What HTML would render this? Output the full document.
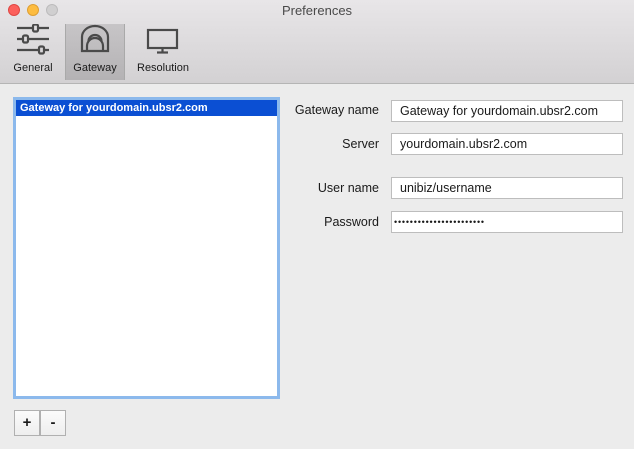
<!DOCTYPE html>
<html><head><style>
*{margin:0;padding:0;box-sizing:border-box}
body{width:634px;height:449px;background:#ececec;font-family:"Liberation Sans",sans-serif;font-size:12.5px;color:#1a1a1a;position:relative;overflow:hidden}
.top{position:absolute;left:0;top:0;width:634px;height:84px;background:linear-gradient(#e8e6e8,#d3d1d3);border-bottom:1px solid #b5b5b5}
.title{position:absolute;top:3px;width:634px;text-align:center;font-size:13px;color:#4a4a4a}
.dot{position:absolute;top:4px;width:12px;height:12px;border-radius:50%}
.tab{position:absolute;top:24px;height:56px;text-align:center;font-size:11px}
.tab svg{position:absolute;left:50%;margin-left:-20px;top:0}
.tab span{position:absolute;left:0;right:0;top:38px}
.sel{background:linear-gradient(#c7c5c7,#b4b2b4);border-left:1px solid #a9a9a9;border-right:1px solid #a9a9a9}
.list{position:absolute;left:13px;top:97px;width:267px;height:302px;background:#fff;border:3px solid #8cb9ec}
.row{background:#0b4fd3;color:#fff;font-weight:bold;font-size:11px;height:16px;line-height:16px;padding-left:4px}
.lbl{position:absolute;width:100px;left:279px;text-align:right;font-size:12.5px}
.in{position:absolute;left:391px;width:232px;height:22px;background:#fff;border:1px solid #bdbdbd;padding-left:8px;line-height:20px;font-size:12.5px}
.btn{position:absolute;top:410px;width:26px;height:26px;border:1px solid #b0b0b0;background:linear-gradient(#fbfbfb,#eeeeee);text-align:center;line-height:24px;font-weight:bold;font-size:15px}
</style></head><body>
<div class="top">
<div class="title">Preferences</div>
<div class="dot" style="left:8px;background:#fc605c;border:1px solid #df4744"></div>
<div class="dot" style="left:27px;background:#fdbc40;border:1px solid #de9f34"></div>
<div class="dot" style="left:46px;background:#d0cfd0;border:1px solid #bcbbbc"></div>
<div class="tab" style="left:4px;width:58px"><svg width="40" height="34" viewBox="0 0 40 34" fill="none" stroke="#4a4a4a" stroke-width="2.2"><line x1="4" y1="4" x2="36" y2="4"/><rect x="20" y="0.5" width="5" height="7" rx="1.5" fill="#e0dee0"/><line x1="4" y1="15" x2="36" y2="15"/><rect x="10" y="11.5" width="5" height="7" rx="1.5" fill="#dcdadc"/><line x1="4" y1="26" x2="36" y2="26"/><rect x="26" y="22.5" width="5" height="7" rx="1.5" fill="#d8d6d8"/></svg><span>General</span></div>
<div class="tab sel" style="left:65px;width:60px"><svg width="40" height="34" viewBox="0 0 40 34" fill="none" stroke="#4a4a4a" stroke-width="2.2"><path d="M7 27V13a13 11 0 0 1 26 0v14z"/><path d="M12 27v-5a8 8 0 0 1 16 0v5"/><path d="M13.5 17a6.5 6 0 0 1 13 0"/></svg><span>Gateway</span></div>
<div class="tab" style="left:132px;width:62px"><svg width="40" height="34" viewBox="0 0 40 34" fill="none" stroke="#4a4a4a" stroke-width="2.2"><rect x="5" y="6" width="29" height="18"/><line x1="19.5" y1="24" x2="19.5" y2="28"/><line x1="14" y1="28.5" x2="25" y2="28.5"/></svg><span>Resolution</span></div>
</div>
<div class="list"><div class="row">Gateway for yourdomain.ubsr2.com</div></div>
<div class="lbl" style="top:103px">Gateway name</div>
<div class="in" style="top:100px">Gateway for yourdomain.ubsr2.com</div>
<div class="lbl" style="top:137px">Server</div>
<div class="in" style="top:133px">yourdomain.ubsr2.com</div>
<div class="lbl" style="top:181px">User name</div>
<div class="in" style="top:177px">unibiz/username</div>
<div class="lbl" style="top:215px">Password</div>
<div class="in" style="top:211px;padding-left:2px;font-size:9px;letter-spacing:0.8px">•••••••••••••••••••••••</div>
<div class="btn" style="left:14px">+</div>
<div class="btn" style="left:40px">-</div>
</body></html>
